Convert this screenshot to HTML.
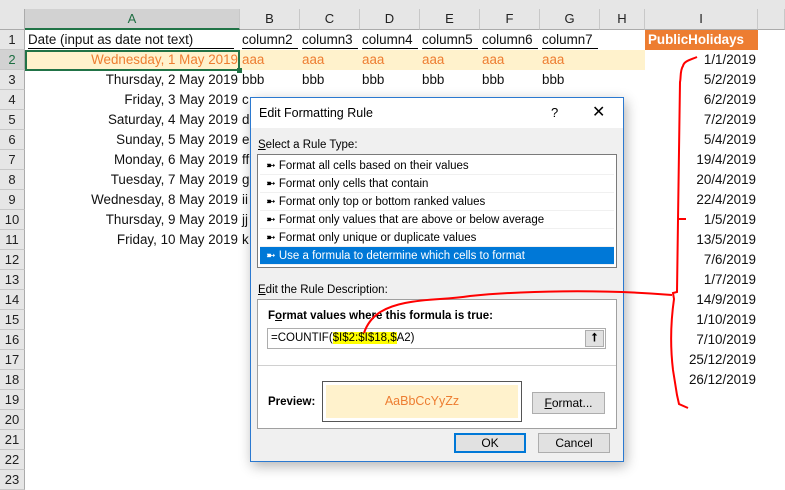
<!DOCTYPE html>
<html><head><meta charset="utf-8"><style>
*{margin:0;padding:0;box-sizing:border-box}
body{width:785px;height:486px;overflow:hidden;background:#fff;font-family:"Liberation Sans",sans-serif;position:relative}
.a{position:absolute;white-space:nowrap}
.ch{position:absolute;top:9px;height:21px;background:#e6e6e6;border-right:1px solid #c8c8c8;border-bottom:1px solid #ababab;font-size:13px;color:#222;text-align:center;line-height:20px}
.rh{position:absolute;left:0;width:25px;height:20px;background:#e6e6e6;border-bottom:1px solid #c8c8c8;border-right:1px solid #ababab;font-size:13px;color:#222;text-align:center;line-height:20px}
.c{position:absolute;font-size:13.4px;color:#111;line-height:20px;height:20px}
.d{font-family:"Liberation Sans",sans-serif;font-size:11.5px;color:#000}
.li{position:absolute;left:2px;right:2px;height:18px;line-height:18px;padding-left:6px;border-bottom:1px solid #f0f0f0}
.btn{position:absolute;background:#e1e1e1;border:1px solid #adadad;text-align:center;font-size:12px;line-height:18px}
</style></head><body>
<div class="a" style="left:0;top:0;width:785px;height:9px;background:#e6e6e6"></div>
<div class="a" style="left:0;top:9px;width:25px;height:21px;background:#e6e6e6;border-right:1px solid #ababab;border-bottom:1px solid #ababab"></div>
<div class="ch" style="left:25px;width:215px;background:#d2d2d2;color:#1e6e42;border-bottom:2px solid #217346">A</div>
<div class="ch" style="left:240px;width:60px">B</div>
<div class="ch" style="left:300px;width:60px">C</div>
<div class="ch" style="left:360px;width:60px">D</div>
<div class="ch" style="left:420px;width:60px">E</div>
<div class="ch" style="left:480px;width:60px">F</div>
<div class="ch" style="left:540px;width:60px">G</div>
<div class="ch" style="left:600px;width:45px">H</div>
<div class="ch" style="left:645px;width:113px">I</div>
<div class="ch" style="left:758px;width:27px"></div>
<div class="a" style="left:25px;top:50px;width:620px;height:20px;background:#fff2cc"></div>
<div class="a" style="left:25px;top:50px;width:215px;height:21px;border:2px solid #217346"></div>
<div class="a" style="left:237px;top:68px;width:5px;height:5px;background:#217346"></div>
<script>
var h='';for(var i=1;i<=23;i++){var t=30+(i-1)*20;h+='<div class="rh" style="top:'+t+'px;'+(i==2?'background:#d2d2d2;color:#1e6e42':'')+'">'+i+'</div>';}
var dates=['Wednesday, 1 May 2019','Thursday, 2 May 2019','Friday, 3 May 2019','Saturday, 4 May 2019','Sunday, 5 May 2019','Monday, 6 May 2019','Tuesday, 7 May 2019','Wednesday, 8 May 2019','Thursday, 9 May 2019','Friday, 10 May 2019'];
var lt=['aaa','bbb','c','d','e','ff','g','ii','jj','k'];
for(var j=0;j<10;j++){var t=50+j*20;var col=j==0?'#ed7d31':'#111';
h+='<div class="c" style="left:25px;width:213px;text-align:right;top:'+t+'px;color:'+col+'">'+dates[j]+'</div>';
if(j<2){for(var k=0;k<6;k++)h+='<div class="c" style="left:'+(242+k*60)+'px;top:'+t+'px;color:'+col+'">'+lt[j]+'</div>';}
else h+='<div class="c" style="left:242px;top:'+t+'px">'+lt[j]+'</div>';}
var hol=['1/1/2019','5/2/2019','6/2/2019','7/2/2019','5/4/2019','19/4/2019','20/4/2019','22/4/2019','1/5/2019','13/5/2019','7/6/2019','1/7/2019','14/9/2019','1/10/2019','7/10/2019','25/12/2019','26/12/2019'];
for(var j=0;j<hol.length;j++)h+='<div class="c" style="left:645px;width:111px;text-align:right;top:'+(50+j*20)+'px">'+hol[j]+'</div>';
document.write(h);
</script>
<div class="c" style="left:28px;top:30px;width:206px;border-bottom:1px solid #000;height:19px">Date (input as date not text)</div>
<div class="c" style="left:242px;top:30px;width:56px;border-bottom:1px solid #000;height:19px">column2</div>
<div class="c" style="left:302px;top:30px;width:56px;border-bottom:1px solid #000;height:19px">column3</div>
<div class="c" style="left:362px;top:30px;width:56px;border-bottom:1px solid #000;height:19px">column4</div>
<div class="c" style="left:422px;top:30px;width:56px;border-bottom:1px solid #000;height:19px">column5</div>
<div class="c" style="left:482px;top:30px;width:56px;border-bottom:1px solid #000;height:19px">column6</div>
<div class="c" style="left:542px;top:30px;width:56px;border-bottom:1px solid #000;height:19px">column7</div>
<div class="c" style="left:645px;top:30px;width:113px;background:#ed7d31;color:#fff;font-weight:bold;padding-left:3px">PublicHolidays</div>

<div class="a d" style="left:250px;top:97px;width:374px;height:365px;background:#f0f0f0;border:1px solid #2b79d0;box-shadow:2px 4px 12px rgba(0,0,0,.3)">
 <div class="a" style="left:0;top:0;width:372px;height:30px;background:#fff"></div>
 <div class="a" style="left:8px;top:8px;font-size:12.5px">Edit Formatting Rule</div>
 <div class="a" style="left:300px;top:7px;font-size:13px">?</div>
 <div class="a" style="left:341px;top:4px;font-size:16px">✕</div>
 <div class="a" style="left:7px;top:41px"><u>S</u>elect a Rule Type:</div>
 <div class="a" style="left:6px;top:56px;width:360px;height:114px;background:#fff;border:1px solid #7a7a7a">
  <div class="li" style="top:2px">➼ Format all cells based on their values</div>
  <div class="li" style="top:20px">➼ Format only cells that contain</div>
  <div class="li" style="top:38px">➼ Format only top or bottom ranked values</div>
  <div class="li" style="top:56px">➼ Format only values that are above or below average</div>
  <div class="li" style="top:74px">➼ Format only unique or duplicate values</div>
  <div class="li" style="top:92px;background:#0078d7;color:#fff">➼ Use a formula to determine which cells to format</div>
 </div>
 <div class="a" style="left:7px;top:186px"><u>E</u>dit the Rule Description:</div>
 <div class="a" style="left:6px;top:201px;width:360px;height:130px;border:1px solid #a0a0a0;background:#fff">
  <div class="a" style="left:10px;top:10px;font-weight:bold">F<u>o</u>rmat values where this formula is true:</div>
  <div class="a" style="left:9px;top:28px;width:339px;height:21px;border:1px solid #adadad;background:#fff;line-height:19px;padding-left:3px">=COUNTIF(<span style="background:#ffff00">$I$2:$I$18,$</span>A2)
   <div class="a" style="right:1px;top:1px;width:19px;height:17px;background:#e1e1e1;border:1px solid #adadad;text-align:center;line-height:15px;font-weight:bold">⭡</div></div>
  <div class="a" style="left:0;top:65px;width:358px;height:1px;background:#d0d0d0"></div>
  <div class="a" style="left:10px;top:96px;font-weight:bold">Preview:</div>
  <div class="a" style="left:64px;top:81px;width:200px;height:41px;border:1px solid #555;padding:3px;background:#fff"><div style="width:100%;height:100%;background:#fff2cc;color:#ed7d31;text-align:center;line-height:33px;font-size:12.5px">AaBbCcYyZz</div></div>
  <div class="btn" style="left:274px;top:92px;width:73px;height:22px;line-height:20px"><u>F</u>ormat...</div>
 </div>
 <div class="btn" style="left:203px;top:335px;width:72px;height:20px;border:2px solid #0078d7;line-height:16px">OK</div>
 <div class="btn" style="left:287px;top:335px;width:72px;height:20px">Cancel</div>
</div>

<svg class="a" style="left:0;top:0" width="785" height="486">
<path d="M697,57 C690,60 684,61 683,66 C680,70 681,78 680,82 L678,220 L677,292 L673,293 L674,299 C671,320 670,345 673,370 L677,395 L679,404 L688,408" fill="none" stroke="#f00" stroke-width="2"/>
<path d="M678,219 L686,219" stroke="#f00" stroke-width="2"/>
<path d="M364,333 C370,315 385,307 405,303 C430,298 445,300 470,296 C520,291 600,289 672,295" fill="none" stroke="#f00" stroke-width="2"/>
</svg>
</body></html>
